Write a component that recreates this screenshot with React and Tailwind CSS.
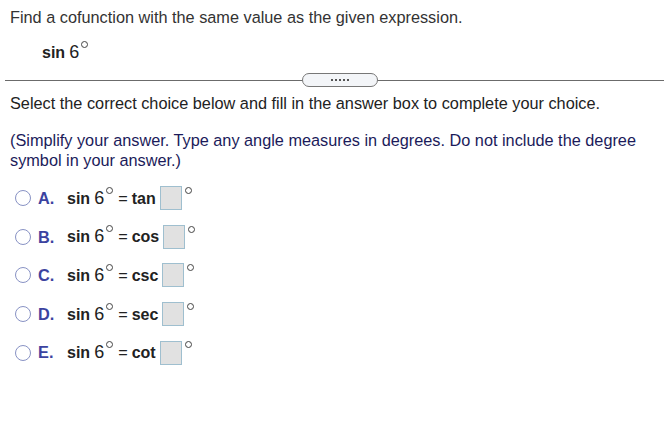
import React from 'react';

const choices = [
  { letter: 'A', fn: 'tan' },
  { letter: 'B', fn: 'cos' },
  { letter: 'C', fn: 'csc' },
  { letter: 'D', fn: 'sec' },
  { letter: 'E', fn: 'cot' },
];

function SinSix() {
  return (
    <>
      <span className="font-bold text-[16px]">sin</span>
      <span className="ml-[4px] text-[18px]">6</span>
      <span className="inline-block ml-[2px] w-[7px] h-[7px] rounded-full border border-[#444] relative -top-[10px]" />
    </>
  );
}

export default function App() {
  return (
    <div className="w-[664px] h-[434px] bg-white text-[16.3px] text-[#333] font-['Liberation_Sans',Arial,sans-serif] overflow-hidden">
      <div className="pt-[8px] pl-[10px] leading-[18px]">
        Find a cofunction with the same value as the given expression.
      </div>
      <div className="pt-[16px] pl-[42px] leading-[20px] text-[#222] flex items-baseline">
        <SinSix />
      </div>

      <div className="relative mt-[10px] ml-[5px] h-[14px] flex items-center">
        <div className="w-full h-[1px] bg-[#6b6b6b]" />
        <div className="absolute left-[297px] top-0 w-[76px] h-[14px] rounded-full border border-[#777] bg-[#f3f5f8] flex items-center justify-center gap-[2px]">
          {[0, 1, 2, 3, 4].map((i) => (
            <span key={i} className="w-[2px] h-[2px] bg-[#555]" />
          ))}
        </div>
      </div>

      <div className="pt-[7px] pl-[10px] leading-[18px] text-[#222]">
        Select the correct choice below and fill in the answer box to complete your choice.
      </div>
      <div className="pt-[18px] pl-[10px] pr-[20px] leading-[20px] text-[#1b1b5a]">
        (Simplify your answer. Type any angle measures in degrees. Do not include the degree symbol in your answer.)
      </div>

      <div className="pt-[9px] flex flex-col">
        {choices.map((c) => (
          <div key={c.letter} className="h-[38.6px] flex items-center pl-[15px]">
            <span className="w-[16px] h-[16px] rounded-full border-[1.5px] border-[#8892c4] bg-white" />
            <span className="ml-[7px] w-[29px] text-[#3c43a0] font-bold">{c.letter}.</span>
            <span className="text-[#222] flex items-baseline">
              <SinSix />
              <span className="ml-[5px]">=</span>
              <span className="ml-[4px] font-bold text-[16px]">{c.fn}</span>
            </span>
            <span className="ml-[4px] w-[22px] h-[24px] bg-[#e1e1e1] border border-[#9fbfcf]" />
            <span className="self-start mt-[8px] ml-[3px] w-[7px] h-[7px] rounded-full border border-[#444]" />
          </div>
        ))}
      </div>
    </div>
  );
}
